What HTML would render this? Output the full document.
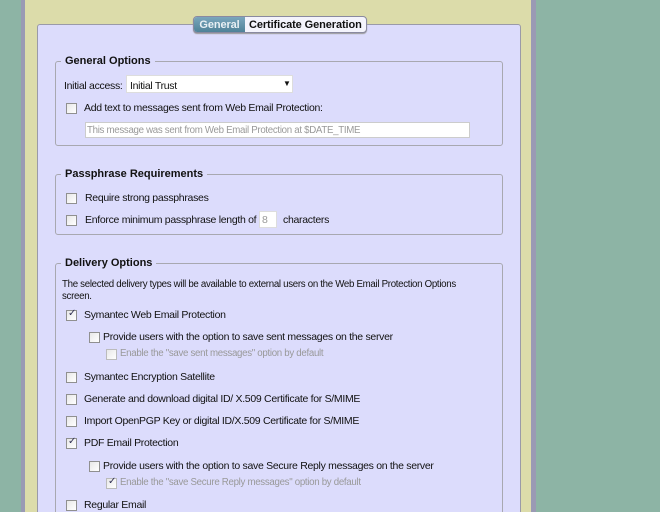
<!DOCTYPE html>
<html><head><style>
*{margin:0;padding:0;box-sizing:border-box}
html,body{width:660px;height:512px;overflow:hidden}
body{background:#8db4a5;font-family:"Liberation Sans",Arial,sans-serif;font-size:10.5px;letter-spacing:-0.3px;color:#111;position:relative}
.frame{position:absolute;left:21px;top:-5px;width:515px;height:530px;background:#dcdcaa;border-left:4px solid #9a9ab4;border-right:5px solid #9a9ab4}
.panel{position:absolute;left:37px;top:24px;width:484px;height:500px;background:#dcdcfc;border:1px solid #9a9aa8;border-radius:3px}
.tabs{position:absolute;left:193px;top:16px;height:17px;display:flex;border:1px solid #8a8aa0;border-radius:4px;overflow:hidden;background:#f4f4fc;box-shadow:0 1px 1px #999;letter-spacing:-0.1px}
.tab{font-weight:bold;padding:1px 4px 0;line-height:15px;font-size:11px}
.tab.on{background:linear-gradient(#7aa6bc,#4f8298);color:#e8f0f4;width:51px;text-align:center}
.fs{position:absolute;left:55px;width:448px;border:1px solid #a8a8b0;border-radius:3px}
.lg{position:absolute;left:5px;top:-7px;background:#dcdcfc;padding:0 4px;font-weight:bold;font-size:11px;letter-spacing:0}
.t{position:absolute;white-space:nowrap}
.cb{position:absolute;width:11px;height:11px;border:1px solid #909090;background:linear-gradient(135deg,#e8e8e8,#fff)}
.cb.ck::after{content:"✓";position:absolute;left:1px;top:-3px;font-size:10px;color:#335}
.dim{color:#999}
.cb.dm{border-color:#bbb}
.inp{position:absolute;background:#fff;border:1px solid #bbb}
.sm{font-size:9.7px}
</style></head><body>
<div class="frame"></div>
<div class="panel"></div>
<div class="tabs"><div class="tab on">General</div><div class="tab">Certificate Generation</div></div>

<div class="fs" style="top:61px;height:85px"><div class="lg">General Options</div></div>
<div class="t" style="left:64px;top:80px">Initial access:</div>
<div class="inp" style="left:126px;top:75px;width:167px;height:18px;border-color:#ddd"></div>
<div class="t" style="left:130px;top:80px">Initial Trust</div>
<div class="t" style="left:283px;top:79px;font-size:8px">▼</div>
<div class="cb" style="left:66px;top:103px"></div>
<div class="t" style="left:84px;top:102px">Add text to messages sent from Web Email Protection:</div>
<div class="inp" style="left:85px;top:122px;width:385px;height:16px;border-color:#ccc"></div>
<div class="t dim sm" style="left:87px;top:125px">This message was sent from Web Email Protection at $DATE_TIME</div>

<div class="fs" style="top:174px;height:61px"><div class="lg">Passphrase Requirements</div></div>
<div class="cb" style="left:66px;top:193px"></div>
<div class="t" style="left:85px;top:192px">Require strong passphrases</div>
<div class="cb" style="left:66px;top:215px"></div>
<div class="t" style="left:85px;top:214px">Enforce minimum passphrase length of</div>
<div class="inp" style="left:259px;top:211px;width:18px;height:17px;border-color:#ddd"></div>
<div class="t dim" style="left:262px;top:214px">8</div>
<div class="t" style="left:283px;top:214px">characters</div>

<div class="fs" style="top:263px;height:270px"><div class="lg">Delivery Options</div></div>
<div class="t sm" style="left:62px;top:279px">The selected delivery types will be available to external users on the Web Email Protection Options</div>
<div class="t sm" style="left:62px;top:291px">screen.</div>
<div class="cb ck" style="left:66px;top:310px"></div>
<div class="t" style="left:84px;top:309px">Symantec Web Email Protection</div>
<div class="cb" style="left:89px;top:332px"></div>
<div class="t" style="left:103px;top:331px">Provide users with the option to save sent messages on the server</div>
<div class="cb dm" style="left:106px;top:349px"></div>
<div class="t dim sm" style="left:120px;top:348px">Enable the "save sent messages" option by default</div>
<div class="cb" style="left:66px;top:372px"></div>
<div class="t" style="left:84px;top:371px">Symantec Encryption Satellite</div>
<div class="cb" style="left:66px;top:394px"></div>
<div class="t" style="left:84px;top:393px">Generate and download digital ID/ X.509 Certificate for S/MIME</div>
<div class="cb" style="left:66px;top:416px"></div>
<div class="t" style="left:84px;top:415px">Import OpenPGP Key or digital ID/X.509 Certificate for S/MIME</div>
<div class="cb ck" style="left:66px;top:438px"></div>
<div class="t" style="left:84px;top:437px">PDF Email Protection</div>
<div class="cb" style="left:89px;top:461px"></div>
<div class="t" style="left:103px;top:460px">Provide users with the option to save Secure Reply messages on the server</div>
<div class="cb dm ck" style="left:106px;top:478px"></div>
<div class="t dim sm" style="left:120px;top:477px">Enable the "save Secure Reply messages" option by default</div>
<div class="cb" style="left:66px;top:500px"></div>
<div class="t" style="left:84px;top:499px">Regular Email</div>
</body></html>
